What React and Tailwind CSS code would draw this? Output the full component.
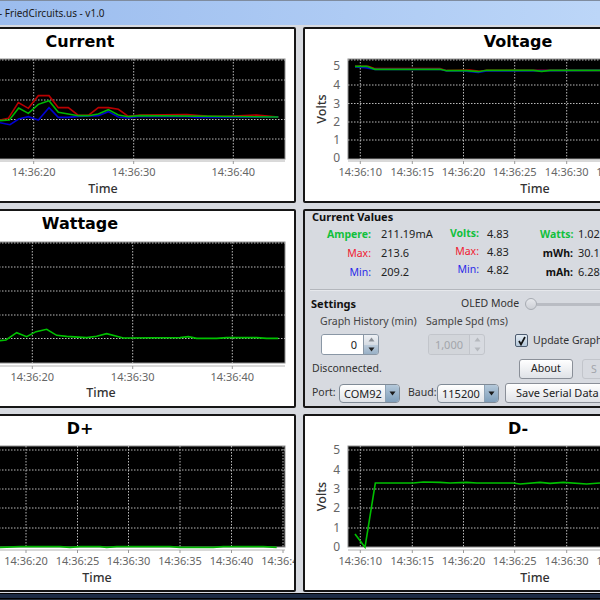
const scale = (list, ox, oy) => list.map(([a, b]) => `${ox + a / 3},${oy + b / 3}`).join(" ");

const currentLines = [
  ["#b80000", [[0,360],[25,355],[55,308],[85,325],[115,287],[147,287],[175,323],[205,323],[235,346],[265,346],[295,323],[325,323],[355,328],[385,349],[420,345],[560,344],[620,348],[680,349],[770,345],[835,351]]],
  ["#0000d0", [[0,368],[30,374],[56,357],[85,350],[115,360],[147,323],[175,352],[205,352],[235,349],[295,347],[325,335],[355,351],[385,354],[420,349],[560,350],[590,352],[835,351]]],
  ["#00b400", [[0,362],[28,360],[56,324],[85,340],[115,313],[147,302],[175,337],[235,347],[265,347],[295,342],[325,329],[355,345],[385,350],[420,347],[835,351]]],
];
const voltageLines = [
  ["#b80000", [[165,199],[205,199],[225,206],[420,206],[440,212],[510,210],[540,214],[560,211],[900,211]]],
  ["#0000d0", [[165,201],[195,203],[225,208],[420,208],[440,213],[490,213],[535,217],[560,213],[900,211]]],
  ["#00b400", [[165,199],[200,199],[225,208],[420,208],[440,212],[500,212],[535,215],[560,211],[700,211],[725,214],[750,211],[900,211]]],
];
const wattLines = [["#00c000", [[0,407],[18,405],[50,383],[80,395],[108,380],[140,373],[170,391],[200,394],[260,398],[290,394],[320,386],[370,399],[540,398],[565,395],[590,400],[650,400],[680,398],[770,398],[800,400],[835,400]]]];
const dPlusLines = [["#00b400", [[0,427],[60,425],[180,425],[210,427],[240,425],[300,425],[320,427],[350,425],[510,425],[540,427],[640,427],[670,425],[790,425],[830,427]]]];
const dMinusLines = [["#00c000", [[165,387],[195,427],[226,234],[340,234],[370,231],[420,232],[450,234],[500,232],[530,234],[640,234],[660,237],[720,232],[750,235],[790,232],[860,237],[900,234]]]];

function Chart({ box, plot, axisY, xs, hs, time, labelY, yLabels, lines, zoomY, zoomX = 0 }) {
  return (
    <svg width={box.w} height={box.h} viewBox={`${box.x} ${box.y} ${box.w} ${box.h}`} className="block">
      <rect x={plot.l} y={plot.t} width={plot.r - plot.l} height={plot.b - plot.t} fill="#000" stroke="#8f8f8f" />
      <line x1={plot.l} x2={plot.r} y1={axisY} y2={axisY} stroke="#b4b4b4" />
      {hs.map((y) => (
        <line key={y} x1={plot.l} x2={plot.r} y1={y} y2={y} stroke="#b9b9b9" strokeDasharray="1.5 1.5" />
      ))}
      {xs.map(([x]) => (
        <g key={x}>
          <line x1={x} x2={x} y1={plot.t} y2={plot.b} stroke="#b9b9b9" strokeDasharray="1.5 1.5" />
          <line x1={x} x2={x} y1={axisY} y2={axisY + 3} stroke="#999" />
        </g>
      ))}
      {lines.map(([color, pts]) => (
        <polyline key={color} points={scale(pts, zoomX, zoomY)} fill="none" stroke={color} strokeWidth="1.6" />
      ))}
      {xs.map(([x, label]) => (
        <text key={label} x={x} y={labelY} textAnchor="middle" className="fill-[#666] text-[11px]">{label}</text>
      ))}
      {yLabels && yLabels.map(([y, label]) => (
        <text key={label} x={340} y={y + 4} textAnchor="end" className="fill-[#666] text-[12px]">{label}</text>
      ))}
      {yLabels && (
        <text transform={`translate(326 ${(plot.t + plot.b) / 2}) rotate(-90)`} textAnchor="middle" className="fill-[#333] text-[12.5px] font-medium">Volts</text>
      )}
      <text x={time[0]} y={time[1]} textAnchor="middle" className="fill-[#333] text-[12.5px] font-medium">Time</text>
    </svg>
  );
}

function ChartPanel({ title, children }) {
  return (
    <div className="flex flex-col border-2 border-[#161616] bg-white rounded-[2px] overflow-hidden">
      <div className="h-[24px] pt-[1px] flex items-center justify-center text-[16px] leading-none font-bold text-black font-['DejaVu_Sans',sans-serif]">{title}</div>
      {children}
    </div>
  );
}

function ValueCol({ rows, labelW, gap, rowH }) {
  return (
    <div className="flex flex-col">
      {rows.map(([label, cls, value]) => (
        <div key={label} className={`flex items-center ${rowH}`}>
          <span className={`${labelW} text-right whitespace-nowrap ${cls}`}>{label}</span>
          <span className={`${gap} text-[#222] whitespace-nowrap`}>{value}</span>
        </div>
      ))}
    </div>
  );
}

function Tri({ up, color = "#222" }) {
  return (
    <svg width="7" height="5" viewBox="0 0 7 5" className="block">
      <path d={up ? "M3.5 0.5 L6.5 4.5 H0.5 Z" : "M0.5 0.5 H6.5 L3.5 4.5 Z"} fill={color} />
    </svg>
  );
}

function Combo({ value, width }) {
  return (
    <div className={`${width} h-[19px] flex border border-[#7f8a96] rounded-[4px] overflow-hidden bg-gradient-to-b from-white to-[#dfe3e8]`}>
      <span className="flex-1 pl-[4px] text-[11px] leading-[18px] text-[#222]">{value}</span>
      <span className="w-[14px] flex items-center justify-center border-l border-[#8ea2b5] bg-gradient-to-b from-[#b4c8da] to-[#7f9fbb]">
        <Tri color="#1a1a1a" />
      </span>
    </div>
  );
}

function SettingsPanel() {
  return (
    <div className="border-2 border-[#161616] rounded-[2px] bg-[#d7dae0] overflow-hidden text-[10.5px] text-[#333]">
      <div className="h-[12px] pl-[7px] text-[11px] leading-[12px] font-bold text-[#111]">Current Values</div>
      <div className="flex h-[64px] pt-[2px]">
        <div className="w-[140px]">
          <ValueCol
            labelW="w-[66px]"
            gap="ml-[10px] text-[11px]"
            rowH="h-[19px]"
            rows={[
              ["Ampere:", "font-bold text-[#11c03c]", "211.19mA"],
              ["Max:", "text-[#f02030]", "213.6"],
              ["Min:", "text-[#2a2ae8]", "209.2"],
            ]}
          />
        </div>
        <div className="w-[95px]">
          <ValueCol
            labelW="w-[34px]"
            gap="ml-[8px] text-[11px]"
            rowH="h-[18px]"
            rows={[
              ["Volts:", "font-bold text-[#11c03c]", "4.83"],
              ["Max:", "text-[#f02030]", "4.83"],
              ["Min:", "text-[#2a2ae8]", "4.82"],
            ]}
          />
        </div>
        <div className="w-[90px]">
          <ValueCol
            labelW="w-[33px]"
            gap="ml-[5px] text-[11px]"
            rowH="h-[19px]"
            rows={[
              ["Watts:", "font-bold text-[#11c03c]", "1.02"],
              ["mWh:", "font-bold text-[#111]", "30.13"],
              ["mAh:", "font-bold text-[#111]", "6.28"],
            ]}
          />
        </div>
      </div>
      <div className="ml-[5px] mt-[2px] h-[2px] border-t border-[#b3b6bc] bg-[#e6e8ec]" />
      <div className="flex items-center h-[18px] mt-[4px]">
        <span className="w-[156px] pl-[6px] text-[11px] font-bold text-[#111]">Settings</span>
        <span className="w-[64px] whitespace-nowrap">OLED Mode</span>
        <span className="w-[12px] h-[12px] rounded-full border border-[#a7abb2] bg-gradient-to-b from-[#e6e8ec] to-[#cdd0d6]" />
        <span className="w-[80px] h-[3px] bg-[#b9bcc3]" />
      </div>
      <div className="flex items-center h-[14px] mt-[2px] pl-[15px] text-[#444]">
        <span className="w-[106px] whitespace-nowrap">Graph History (min)</span>
        <span className="whitespace-nowrap">Sample Spd (ms)</span>
      </div>
      <div className="flex mt-[5px]">
        <div className="w-[210px]">
          <div className="flex pl-[16px] gap-[49px]">
            <div className="w-[58px] h-[21px] flex border border-[#8a97a5] rounded-[3px] overflow-hidden">
              <span className="flex-1 bg-white pr-[6px] text-right text-[11px] leading-[19px] text-[#222]">0</span>
              <span className="w-[15px] flex flex-col border-l border-[#8a97a5]">
                <span className="flex-1 flex items-center justify-center bg-gradient-to-b from-[#eef1f5] to-[#d5dbe2]"><Tri up color="#8a8f96" /></span>
                <span className="flex-1 flex items-center justify-center bg-gradient-to-b from-[#bccbda] to-[#98b0c6]"><Tri color="#222" /></span>
              </span>
            </div>
            <div className="w-[57px] h-[21px] flex border border-[#c2c5cb] rounded-[3px] overflow-hidden">
              <span className="flex-1 bg-[#d2d5da] pr-[6px] text-right text-[11px] leading-[19px] text-[#a2a5ab]">1,000</span>
              <span className="w-[15px] flex flex-col border-l border-[#c2c5cb]">
                <span className="flex-1 flex items-center justify-center"><Tri up color="#b5b8bd" /></span>
                <span className="flex-1 flex items-center justify-center"><Tri color="#b5b8bd" /></span>
              </span>
            </div>
          </div>
          <div className="pl-[7px] mt-[6px] h-[14px] leading-[14px] text-[#333]">Disconnected.</div>
        </div>
        <div className="flex flex-col">
          <div className="flex items-center h-[13px] gap-[5px]">
            <span className="w-[13px] h-[13px] flex items-center justify-center border border-[#4d5c70] rounded-[2px] bg-gradient-to-b from-[#e3ebf3] to-[#b5c8da]">
              <svg width="10" height="10" viewBox="0 0 10 10" className="block">
                <path d="M2 5 L4 8.5 L8 1" fill="none" stroke="#111" strokeWidth="1.7" />
              </svg>
            </span>
            <span className="whitespace-nowrap">Update Graph</span>
          </div>
          <div className="flex ml-[4px] mt-[12px] gap-[9px]">
            <div className="w-[54px] h-[20px] flex items-center justify-center border border-[#8a8f98] rounded-[3px] bg-gradient-to-b from-white to-[#dfe2e7] text-[#222]">About</div>
            <div className="w-[30px] h-[20px] pl-[8px] leading-[18px] border border-[#c2c5cb] rounded-[3px] text-[#a2a5ab]">S</div>
          </div>
        </div>
      </div>
      <div className="flex items-center mt-[4px] pl-[7px] text-[#333]">
        <span className="w-[27px]">Port:</span>
        <Combo value="COM92" width="w-[61px]" />
        <span className="w-[29px] ml-[8px]">Baud:</span>
        <Combo value="115200" width="w-[62px]" />
        <div className="w-[110px] h-[20px] ml-[6px] pl-[10px] text-[11px] leading-[18px] shrink-0 border border-[#8a8f98] rounded-[3px] bg-gradient-to-b from-white to-[#dfe2e7] text-[#222] whitespace-nowrap">Save Serial Data</div>
      </div>
    </div>
  );
}

export default function App() {
  return (
    <div className="w-[600px] h-[600px] overflow-hidden flex flex-col bg-[#d7dae0] font-['Noto_Sans',sans-serif]">
      <div className="h-[25px] shrink-0 border-t border-[#7f8c9f] bg-gradient-to-r from-[#9bbcee] to-[#bcd6f8] text-[10px] leading-[24px] text-[#1a1a1a] whitespace-nowrap">
        <span className="-ml-[1px] inline-block">- FriedCircuits.us - v1.0</span>
      </div>
      <div className="-ml-[136px] mt-[2px] grid grid-cols-[432px_430px] grid-rows-[176px_199px_178px] gap-x-[7px] gap-y-[6px]">
        <ChartPanel title="Current">
          <Chart
            box={{ x: -134, y: 53, w: 428, h: 148 }}
            plot={{ l: -79, t: 59, r: 285, b: 159 }}
            axisY={161}
            xs={[[33.7, "14:36:20"], [133.7, "14:36:30"], [233.3, "14:36:40"]]}
            hs={[60, 80, 100, 119.5, 139]}
            labelY={176}
            time={[103, 193]}
            lines={currentLines}
            zoomY={0}
          />
        </ChartPanel>
        <ChartPanel title="Voltage">
          <Chart
            box={{ x: 305, y: 53, w: 426, h: 148 }}
            plot={{ l: 348, t: 59, r: 720, b: 159 }}
            axisY={161}
            xs={[[360.3, "14:36:10"], [412.3, "14:36:15"], [463.5, "14:36:20"], [514.7, "14:36:25"], [566.7, "14:36:30"], [618, "14:36:35"]]}
            hs={[60, 85, 103.5, 122, 140]}
            labelY={176}
            time={[535, 193]}
            yLabels={[[66, "5"], [85, "4"], [103.5, "3"], [122, "2"], [140, "1"], [158, "0"]]}
            lines={voltageLines}
            zoomY={0}
            zoomX={300}
          />
        </ChartPanel>
        <ChartPanel title="Wattage">
          <Chart
            box={{ x: -134, y: 235, w: 428, h: 171 }}
            plot={{ l: -79, t: 242, r: 285, b: 363 }}
            axisY={366}
            xs={[[32.3, "14:36:20"], [132.7, "14:36:30"], [232.3, "14:36:40"]]}
            hs={[243, 267, 291, 315, 338.5]}
            labelY={381}
            time={[101, 397]}
            lines={wattLines}
            zoomY={205}
          />
        </ChartPanel>
        <SettingsPanel />
        <ChartPanel title="D+">
          <Chart
            box={{ x: -134, y: 440, w: 428, h: 150 }}
            plot={{ l: -91, t: 446, r: 285, b: 547 }}
            axisY={550}
            xs={[[26, "14:36:20"], [77.5, "14:36:25"], [128.5, "14:36:30"], [180, "14:36:35"], [231.5, "14:36:40"], [283, "14:36:45"]]}
            hs={[450, 470, 489, 508, 528]}
            labelY={565}
            time={[97, 582]}
            lines={dPlusLines}
            zoomY={405}
          />
        </ChartPanel>
        <ChartPanel title="D-">
          <Chart
            box={{ x: 305, y: 440, w: 426, h: 150 }}
            plot={{ l: 348, t: 446, r: 720, b: 547 }}
            axisY={550}
            xs={[[360.3, "14:36:10"], [412.3, "14:36:15"], [463.5, "14:36:20"], [514.7, "14:36:25"], [566.7, "14:36:30"], [618, "14:36:35"]]}
            hs={[450, 470, 489, 508, 528]}
            labelY={565}
            time={[535, 582]}
            yLabels={[[450, "5"], [470, "4"], [489, "3"], [508, "2"], [528, "1"], [547, "0"]]}
            lines={dMinusLines}
            zoomY={405}
            zoomX={300}
          />
        </ChartPanel>
      </div>
      <div className="flex-1 mt-[1px] flex flex-col border-t border-black bg-[#1c2b44]">
        <div className="h-[4px]" />
        <div className="flex-1 border-t border-black bg-[#222a33]" />
      </div>
    </div>
  );
}
